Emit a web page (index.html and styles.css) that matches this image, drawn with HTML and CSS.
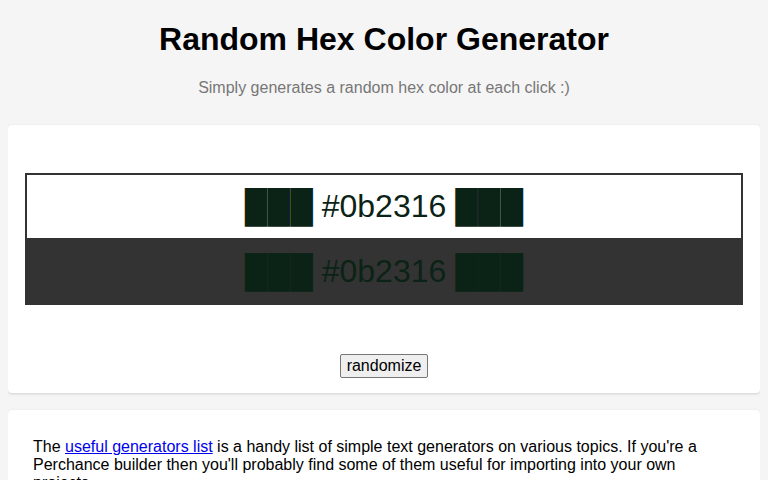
FILE: index.html
```html
<!DOCTYPE html>
<html>
<head>
<meta charset="utf-8">
<link rel="stylesheet" href="styles.css">
</head>
<body>
<h1 class="title">Random Hex Color Generator</h1>
<p class="subtitle">Simply generates a random hex color at each click :)</p>
<div class="card main-card">
  <div class="swatch">
    <div class="swatch-light">███ #0b2316 ███</div>
    <div class="swatch-dark">███ #0b2316 ███</div>
  </div>
  <div class="actions">
    <button class="randomize">randomize</button>
  </div>
</div>
<div class="card info-card">
  <p class="info">The <a href="#">useful generators list</a> is a handy list of simple text generators on various topics. If you're a Perchance builder then you'll probably find some of them useful for importing into your own projects.</p>
</div>
</body>
</html>
```
FILE: styles.css
```css
html, body {
  background: #f5f5f5;
}
body {
  margin: 0 8px 8px;
  padding-top: 0.1px;
  font-family: "Liberation Sans", Arial, sans-serif;
  color: #000;
}
.title {
  margin: 21px 0 0;
  font-size: 32px;
  line-height: 37px;
  font-weight: bold;
  text-align: center;
}
.subtitle {
  margin: 21px 0 0;
  font-size: 16px;
  line-height: 18px;
  color: #777;
  text-align: center;
}
.card {
  background: #fff;
  border-radius: 4px;
  box-shadow: 0 1px 3px rgba(0, 0, 0, 0.15);
}
.main-card {
  margin-top: 28px;
  padding: 48px 17px 15px;
}
.swatch {
  border: 2px solid #333;
  font-size: 32px;
  line-height: 37px;
  color: #0b2316;
  text-align: center;
}
.swatch-light {
  background: #fff;
  padding: 13px 0;
}
.swatch-dark {
  background: #333;
  padding: 15px 0 13px;
}
.actions {
  margin-top: 49px;
  text-align: center;
}
.randomize {
  font-family: "Liberation Sans", Arial, sans-serif;
  font-size: 16px;
  line-height: 18px;
  padding: 2px 6px;
  background: #efefef;
  border: 1px solid #767676;
  border-radius: 2px;
  color: #000;
}
.info-card {
  margin-top: 17px;
  padding: 28px 25px 20px;
}
.info {
  margin: 0;
  font-size: 16px;
  line-height: 18px;
}
.info a {
  color: #0000ee;
}
```
